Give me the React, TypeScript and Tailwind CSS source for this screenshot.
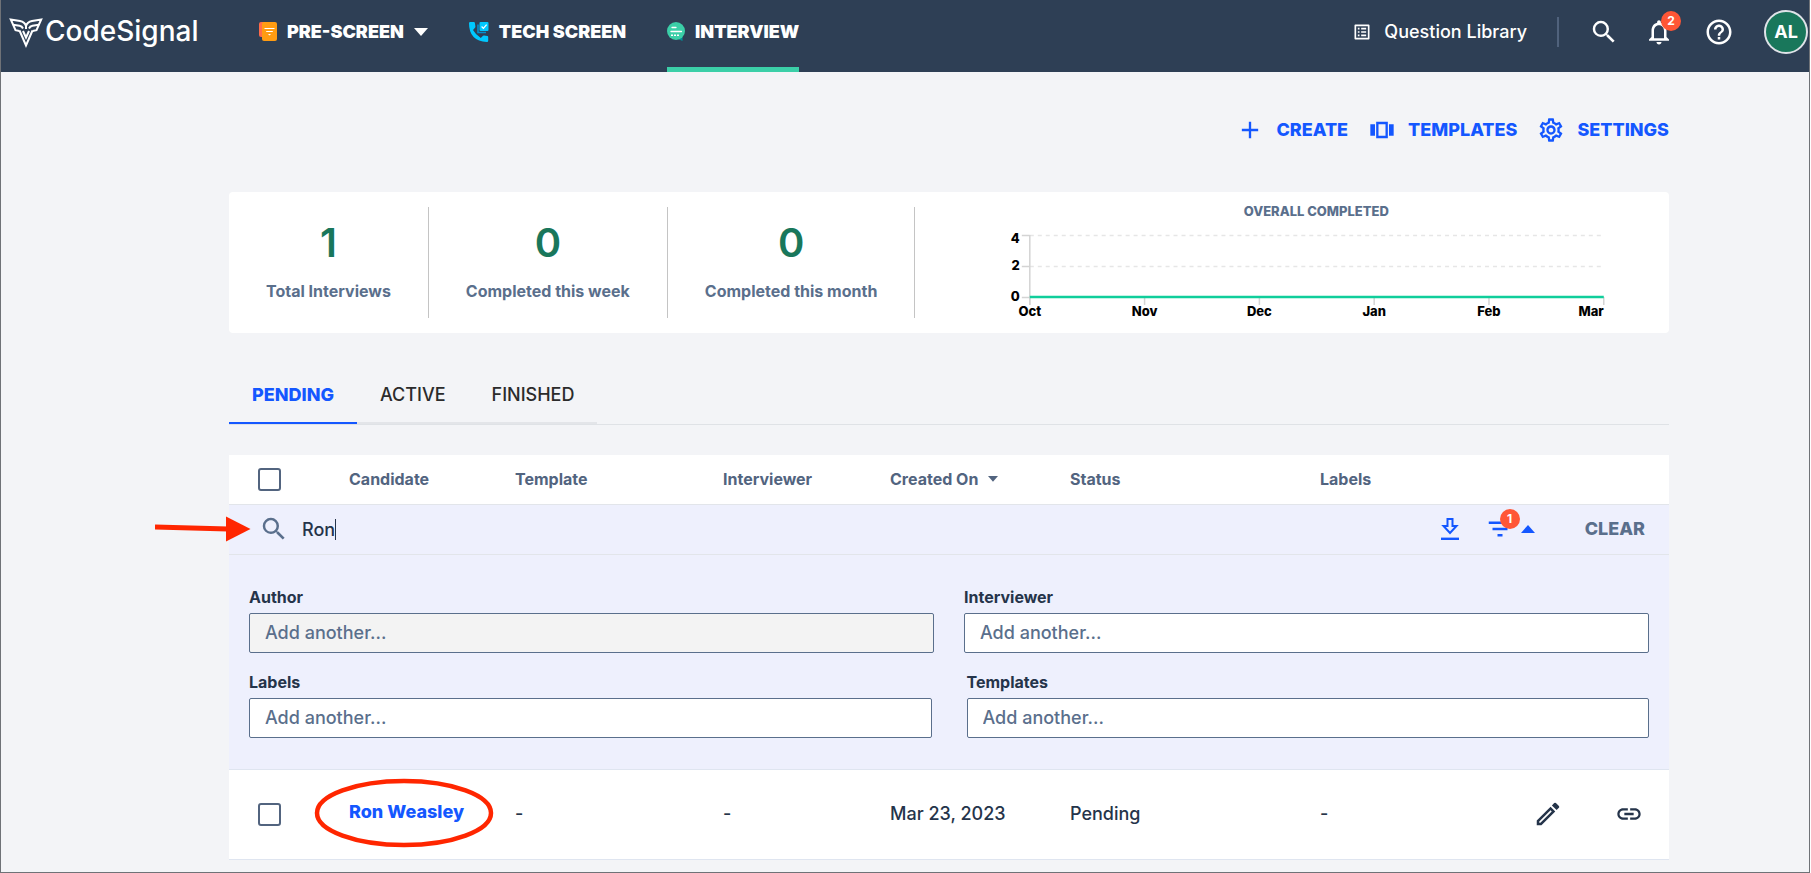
import React from 'react';
import {
    MdSearch,
    MdNotificationsNone,
    MdHelpOutline,
    MdListAlt,
    MdAdd,
    MdOutlineViewCarousel,
    MdOutlineSettings,
    MdOutlineModeEdit,
    MdLink,
    MdFilterList,
} from 'react-icons/md';

const months = ['Oct', 'Nov', 'Dec', 'Jan', 'Feb', 'Mar'];

const stats = [
    { value: 1, label: 'Total Interviews' },
    { value: 0, label: 'Completed this week' },
    { value: 0, label: 'Completed this month' },
];

const Logo: React.FC = () => (
    <a href="#" className="flex items-center gap-[2px] text-white" aria-label="CodeSignal">
        <svg width="34" height="30" viewBox="0 0 34 30" fill="none" stroke="currentColor" strokeWidth="2" strokeLinejoin="miter" className="mt-1">
            <path d="M10.500 13L6.500 12.200L1.800 1.500L11 3Q15.800 4 17 8Q18.200 4 23 3L32.200 1.500L27.500 12.200L23.500 13" />
            <path d="M4 6.800L10.500 7.800Q13 8.300 14 10.500M30 6.800L23.500 7.800Q21 8.300 20 10.500" />
            <path d="M10.500 12.500L17 27.500L23.500 12.500M14 13L17 19.500L20 13M17 7V11" />
        </svg>
        <span className="text-[28px] leading-9 font-medium">CodeSignal</span>
    </a>
);

const PreScreenIcon: React.FC = () => (
    <svg width="18" height="20" viewBox="0 0 18 20">
        <rect x="0" y="0" width="14" height="15" rx="2" fill="#ff6b4a" />
        <rect x="3" y="0" width="15" height="19" rx="2" fill="#ff9c12" />
        <path d="M5.500 6.500h10M7.200 9.500h6.600" stroke="#fff" strokeWidth="1.2" />
        <path d="M9 12h3l-1.500 1.600z" fill="#fff" />
    </svg>
);

const TechScreenIcon: React.FC = () => (
    <svg width="20" height="20" viewBox="0 0 20 20">
        <path d="M1.2 0H4.8Q5.8 0 5.9 1L6.4 4.6Q6.4 5.3 6 5.8L4 8Q6.8 13 11.8 15.9L14 13.8Q14.5 13.4 15.2 13.5L18.3 14Q19.2 14.2 19.2 15.1V18.8Q19.2 20 18 20Q0 19 0 1.2Q0 0 1.2 0Z" fill="#00c8ff" />
        <path d="M9 2.5V10.5H17" stroke="#0091d0" strokeWidth="1.6" fill="none" />
        <rect x="10.5" y="0" width="9" height="9" rx="1" fill="#00c8ff" />
        <path d="M12.6 4.5l1.8 1.8 3.2-3.6" stroke="#fff" strokeWidth="1.2" fill="none" />
    </svg>
);

const InterviewIcon: React.FC = () => (
    <svg width="18" height="20" viewBox="0 0 18 20">
        <path d="M9 15h6.5v4L11 17z" fill="#008f95" />
        <circle cx="9" cy="9" r="9" fill="#3bcfa8" />
        <path d="M5 5.5h4M4 9.5h10.5" stroke="#fff" strokeWidth="1.3" strokeLinecap="round" />
        <path d="M4 13.3h8" stroke="#fff" strokeWidth="1.4" strokeDasharray="2 1" />
    </svg>
);

const Caret: React.FC<{ up?: boolean; className: string }> = ({ up, className }) => (
    <svg viewBox="0 0 14 8" className={className} fill="currentColor">
        <path d={up ? 'M0 8L7 0L14 8Z' : 'M0 0H14L7 8Z'} />
    </svg>
);

const DownloadIcon: React.FC = () => (
    <svg width="18" height="22" viewBox="0 0 18 22" fill="none" stroke="currentColor" strokeWidth="2">
        <path d="M6.5 1h5v7h4L9 15L2.5 8h4z" />
        <path d="M0 20.8h18" strokeWidth="2.4" />
    </svg>
);

const Badge: React.FC<{ children: React.ReactNode; className: string }> = ({ children, className }) => (
    <span className={`absolute flex size-5 items-center justify-center rounded-full bg-[#ff5636] text-xs font-bold text-white ${className}`}>
        {children}
    </span>
);

const Checkbox: React.FC<{ label: string }> = ({ label }) => (
    <input
        type="checkbox"
        aria-label={label}
        className="block size-[23px] appearance-none rounded-[3px] border-2 border-[#52647f] bg-white checked:bg-[#1457ff]"
    />
);

const Header: React.FC = () => (
    <header className="flex h-[72px] items-stretch justify-between bg-[#2e3f55] pl-2 pr-px text-white">
        <div className="flex">
            <div className="flex w-[250px] items-center pb-[10px]">
                <Logo />
            </div>
            <nav className="flex gap-[41px] text-lg font-black">
                <a href="#" className="flex items-center gap-[10px] border-b-[5px] border-transparent pb-1">
                    <PreScreenIcon />
                    PRE-SCREEN
                    <Caret className="w-[14px]" />
                </a>
                <a href="#" className="flex items-center gap-[10px] border-b-[5px] border-transparent pb-1">
                    <TechScreenIcon />
                    TECH SCREEN
                </a>
                <a href="#" className="flex items-center gap-[10px] border-b-[5px] border-[#3bcfa8] pb-1">
                    <InterviewIcon />
                    INTERVIEW
                </a>
            </nav>
        </div>
        <div className="flex items-center gap-[30px] pb-2">
            <a href="#" className="flex items-center gap-3 text-lg font-medium">
                <MdListAlt size={20} />
                Question Library
            </a>
            <span className="h-[30px] w-[2px] bg-[#50627c]" />
            <div className="flex gap-[25px]">
                <button aria-label="Search">
                    <MdSearch size={30} />
                </button>
                <button aria-label="Notifications" className="relative">
                    <MdNotificationsNone size={30} />
                    <Badge className="-top-[6px] left-[17px]">2</Badge>
                </button>
            </div>
            <button aria-label="Help">
                <MdHelpOutline size={30} />
            </button>
            <button className="size-11 rounded-full border-2 border-[#dfe3e8] bg-[#19775b] text-lg font-bold">AL</button>
        </div>
    </header>
);

const Chart: React.FC = () => (
    <svg width="100%" height="141" viewBox="914 192 755 141" fontFamily="Inter, sans-serif" fontWeight="800">
        <text x="1316" y="216" textAnchor="middle" fontSize="13" fill="#5a6f8c">OVERALL COMPLETED</text>
        <path d="M1029 235.5H1604M1029 266.5H1604" stroke="#e6e6e6" strokeWidth="1.5" strokeDasharray="4 4" />
        <path d="M1029 235V305M1021 235.5H1029M1021 266.5H1029M1021 297.5H1029" stroke="#d4d4d4" strokeWidth="1.5" fill="none" />
        {[4, 2, 0].map((n, i) => (
            <text key={n} x="1019" y={[243, 270, 301][i]} textAnchor="end" fontSize="13">{n}</text>
        ))}
        {months.map((m, i) => (
            <g key={m}>
                <path d={`M${1029 + i * 115} 297V305`} stroke="#d4d4d4" strokeWidth="1.5" />
                <text x={1029 + i * 115} y="316" textAnchor={i === 5 ? 'end' : 'middle'} fontSize="13">{m}</text>
            </g>
        ))}
        <path d="M1029 297H1604" stroke="#10ce9b" strokeWidth="2.5" />
    </svg>
);

const Stats: React.FC = () => (
    <section className="mt-[50px] flex h-[141px] rounded-sm bg-white">
        {stats.map((s) => (
            <div key={s.label} className="my-[15px] flex flex-col items-center border-r border-[#c4c4c4] px-[37px] pt-3 whitespace-nowrap">
                <span className="text-[40px] leading-[48px] font-semibold text-[#19775b]">{s.value}</span>
                <span className="mt-[14px] text-base leading-5 font-bold text-[#5a6f8c]">{s.label}</span>
            </div>
        ))}
        <div className="min-w-0 flex-1">
            <Chart />
        </div>
    </section>
);

const Tabs: React.FC = () => (
    <div role="tablist" className="mt-[31px] flex h-[61px] border-b border-[#dfe2e6] text-lg">
        <button role="tab" aria-selected="true" className="border-b-2 border-[#1457ff] px-[23px] pt-[3px] font-extrabold text-[#1457ff]">PENDING</button>
        <button role="tab" aria-selected="false" className="border-b-2 border-[#e3e5e9] px-[23px] pt-[3px] font-medium text-[#2b2b2b]">ACTIVE</button>
        <button role="tab" aria-selected="false" className="border-b-2 border-[#e3e5e9] px-[23px] pt-[3px] font-medium text-[#2b2b2b]">FINISHED</button>
    </div>
);

const FilterField: React.FC<{ label: string; disabled?: boolean }> = ({ label, disabled }) => (
    <label className="flex-1 text-base leading-5 font-bold text-[#25344a]">
        {label}
        <input
            type="text"
            placeholder="Add another..."
            disabled={disabled}
            className="mt-[6px] block h-10 w-full rounded-[2px] border border-[#5a6f8c] bg-white px-[15px] text-lg font-medium placeholder:text-[#5a6f8c] disabled:bg-[#f3f3f3]"
        />
    </label>
);

const InterviewTable: React.FC = () => (
    <table className="mt-[30px] w-full table-fixed bg-white text-left">
        <colgroup>
            <col className="w-[120px]" />
            <col className="w-[166px]" />
            <col className="w-[208px]" />
            <col className="w-[167px]" />
            <col className="w-[180px]" />
            <col className="w-[250px]" />
            <col />
            <col className="w-[82px]" />
            <col className="w-[54px]" />
        </colgroup>
        <thead>
            <tr className="h-[49px] border-b border-[#e2e5ea] text-base text-[#52647f]">
                <th className="pl-[29px]">
                    <Checkbox label="Select all" />
                </th>
                <th>Candidate</th>
                <th>Template</th>
                <th>Interviewer</th>
                <th>
                    <button className="flex items-center gap-[10px] font-bold">
                        Created On
                        <Caret className="w-[10px]" />
                    </button>
                </th>
                <th>Status</th>
                <th>Labels</th>
                <th />
                <th />
            </tr>
        </thead>
        <tbody>
            <tr className="h-[50px] border-b border-[#e2e5ea] bg-[#eef0fd]">
                <td colSpan={9}>
                    <div className="flex items-center justify-between pr-6 pl-[30px]">
                        <label className="flex items-center gap-[13px] text-[#5a6f8c]">
                            <MdSearch size={30} />
                            {/* right border stands in for the text caret */}
                            <input
                                type="text"
                                aria-label="Search candidates"
                                defaultValue="Ron"
                                className="field-sizing-content h-[21px] border-r border-[#25344a] text-lg leading-[21px] font-medium text-[#25344a] outline-none"
                            />
                        </label>
                        <div className="flex items-center text-[#1457ff]">
                            <button aria-label="Download">
                                <DownloadIcon />
                            </button>
                            <button aria-label="Filters" className="relative ml-[26px] flex items-center gap-[6px]">
                                <MdFilterList size={30} />
                                <Caret up className="w-[14px]" />
                                <Badge className="-top-[5px] left-[15px]">1</Badge>
                            </button>
                            <button className="ml-[50px] text-lg font-extrabold text-[#5a6f8c]">CLEAR</button>
                        </div>
                    </div>
                </td>
            </tr>
            <tr className="h-[215px] border-b border-[#dfe5f0] bg-[#eef0fd]">
                <td colSpan={9} className="px-5 pt-8 align-top">
                    <div className="flex gap-[30px]">
                        <FilterField label="Author" disabled />
                        <FilterField label="Interviewer" />
                    </div>
                    <div className="mt-[19px] flex gap-[35px]">
                        <FilterField label="Labels" />
                        <FilterField label="Templates" />
                    </div>
                </td>
            </tr>
            <tr className="h-[90px] border-b border-[#dfe5f0] text-lg font-medium text-[#25344a]">
                <td className="pl-[29px]">
                    <Checkbox label="Select Ron Weasley" />
                </td>
                <td>
                    <span className="relative inline-block pb-1">
                        <a href="#" className="font-extrabold text-[#1457ff]">Ron Weasley</a>
                        <svg width="180" height="70" viewBox="0 0 180 70" className="pointer-events-none absolute -top-5 -left-[35px] max-w-none">
                            <ellipse cx="90" cy="35" rx="87" ry="32" fill="none" stroke="#ff2600" strokeWidth="4.5" />
                        </svg>
                    </span>
                </td>
                <td>-</td>
                <td>-</td>
                <td>Mar 23, 2023</td>
                <td>Pending</td>
                <td>-</td>
                <td>
                    <button aria-label="Edit" className="block">
                        <MdOutlineModeEdit size={30} />
                    </button>
                </td>
                <td>
                    <button aria-label="Copy link" className="block">
                        <MdLink size={28} />
                    </button>
                </td>
            </tr>
        </tbody>
    </table>
);

export default function App() {
    return (
        <div className="mr-px border-x border-b border-[#6f7277] bg-[#f3f4f7] font-['Inter',sans-serif]">
            <Header />
            <main className="pt-[46px] pr-[140px] pb-3 pl-[228px]">
                <div className="flex h-6 items-center justify-end gap-5 text-lg font-extrabold text-[#1457ff]">
                    <button className="flex items-center gap-3">
                        <MdAdd size={28} />
                        CREATE
                    </button>
                    <button className="flex items-center gap-3">
                        <MdOutlineViewCarousel size={28} />
                        TEMPLATES
                    </button>
                    <button className="flex items-center gap-3">
                        <MdOutlineSettings size={28} />
                        SETTINGS
                    </button>
                </div>
                <Stats />
                <Tabs />
                <div className="relative">
                    <InterviewTable />
                    {/* arrow pointing at the search box */}
                    <svg width="96" height="26" viewBox="0 0 96 26" className="pointer-events-none absolute top-[61px] -left-[74px]">
                        <path d="M0 11L73 13" stroke="#ff2600" strokeWidth="5" />
                        <path d="M71 0.500L95.500 13L71 25.500Z" fill="#ff2600" />
                    </svg>
                </div>
            </main>
        </div>
    );
}
